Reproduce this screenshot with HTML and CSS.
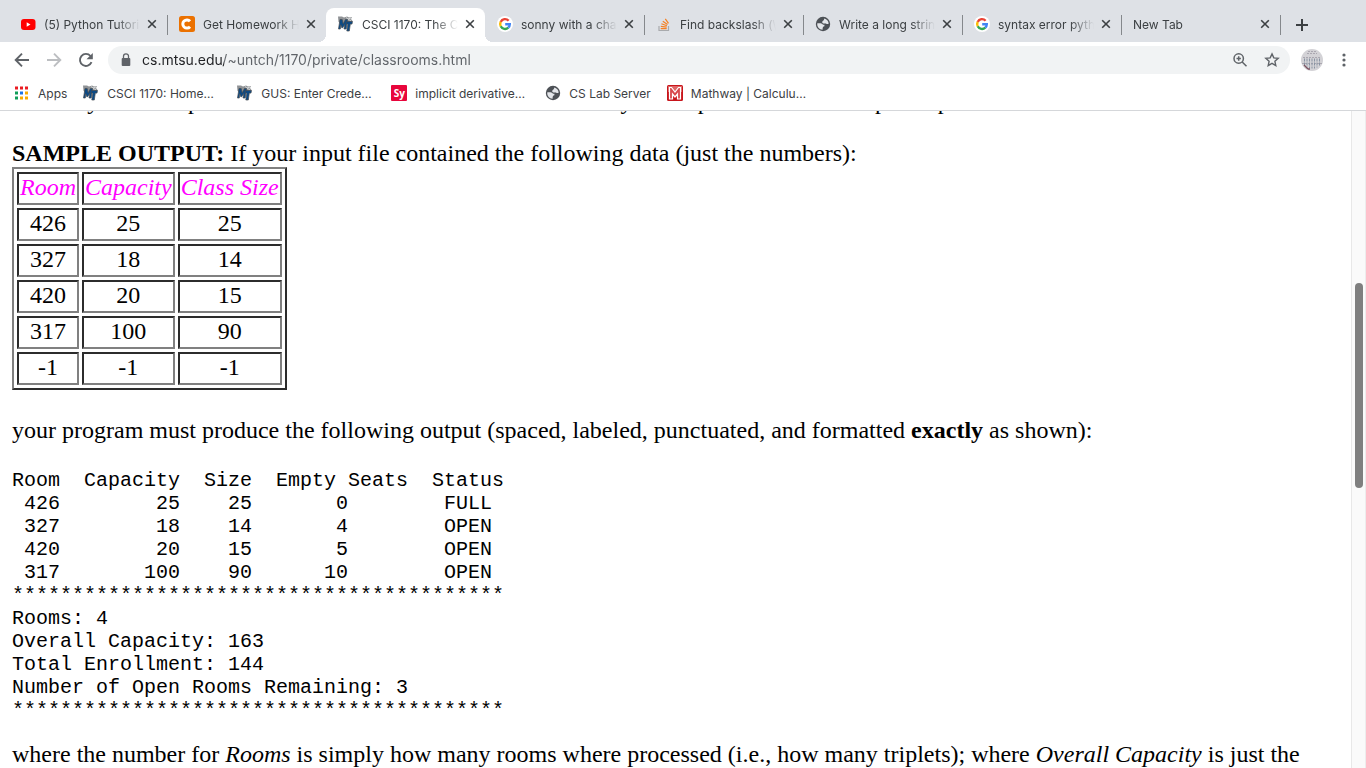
FILE: index.html
```html
<!DOCTYPE html>
<html lang="en">
  <head>
    <meta charset="utf-8">
    <title>CSCI 1170: The Classroom Problem</title>
    <link rel="stylesheet" href="styles.css">
  </head>
  <body>
    <!-- icons used more than once -->
    <svg class="defs" width="0" height="0" aria-hidden="true">
      <symbol id="close" viewBox="0 0 16 16">
        <path d="M4.200 4.200l7.600 7.600M11.800 4.200l-7.600 7.600" stroke="#3c4043" stroke-width="1.600" fill="none"/>
      </symbol>
      <symbol id="google" viewBox="0 0 16 16">
        <circle cx="8" cy="8" r="8" fill="#fff"/>
        <g fill="none" stroke-width="2.4">
          <path d="M11.6 4.7A4.8 4.8 0 0 0 3.7 5.9" stroke="#ea4335"/>
          <path d="M3.7 5.9a4.8 4.8 0 0 0 0 4.4" stroke="#fbbc05"/>
          <path d="M3.7 10.3a4.8 4.8 0 0 0 7.6 1.3" stroke="#34a853"/>
          <path d="M11.3 11.6A4.8 4.8 0 0 0 12.8 8.2H8.2" stroke="#4285f4"/>
        </g>
      </symbol>
      <symbol id="globe" viewBox="0 0 16 16">
        <circle cx="8" cy="8" r="7.2" fill="#4d5156"/>
        <path d="M2.300 7.200h3.200c1.300 0 1.800 1.100 2.600 1.500h1.300v1.600c-1.500.2-1.800 1-1.800 3.400C4.200 13.500 1.800 10.600 2.300 7.200z" fill="#e4e6ea"/>
        <path d="M9.300 2.400c2.400.5 4.200 2.500 4.400 5-.9 1-2 .8-2.700 0H8.700c-1.300 0-1.900-1.200-1.200-2.200.6-.8 1.500-.5 1.800-2.800z" fill="#e4e6ea"/>
      </symbol>
      <symbol id="mt" viewBox="0 0 16 16">
        <path d="M0 .5h4l2 1 3-1 2 1 3-.5-1 2 1.500 2L13 8H4L.5 6z" fill="#8f9295"/>
        <path d="M8 1.500l2 1.500 3-1M10 3.500l3 1" stroke="#e3e5e6" stroke-width=".8" fill="none"/>
        <path d="M.5 13L2 3.500h2.200l1 4.500 2.300-4.500h2L8.200 13H6l.7-4.500-2 3.200h-1l-.9-3L2.300 13z" fill="#0b4a86" stroke="#454b50" stroke-width=".7"/>
        <path d="M8.500 5.500h6l-.5 2.600h-1.700L11.300 15H8.800l1-6.900H8z" fill="#0b4a86" stroke="#454b50" stroke-width=".7"/>
      </symbol>
    </svg>

    <header class="browser">
      <div class="tab-strip">
        <div class="tab">
          <svg class="icon" viewBox="0 0 16 16"><rect x="1" y="3" width="14.500" height="11" rx="3" fill="#f00"/><path d="M6.700 6.200v4.600l3.800-2.300z" fill="#fff"/></svg>
          <span class="tab-title">(5) Python Tutorial</span>
          <button class="tab-close" aria-label="Close tab"><svg class="icon"><use href="#close"/></svg></button>
        </div>
        <div class="tab no-line">
          <svg class="icon" viewBox="0 0 16 16"><rect width="16" height="16" rx="2.500" fill="#eb7100"/><path d="M11 5.300A4.100 4.100 0 1 0 11 10.700" fill="none" stroke="#fff" stroke-width="3"/></svg>
          <span class="tab-title">Get Homework Help</span>
          <button class="tab-close" aria-label="Close tab"><svg class="icon"><use href="#close"/></svg></button>
        </div>
        <div class="tab active no-line">
          <svg class="icon"><use href="#mt"/></svg>
          <span class="tab-title">CSCI 1170: The Classroom</span>
          <button class="tab-close" aria-label="Close tab"><svg class="icon"><use href="#close"/></svg></button>
        </div>
        <div class="tab">
          <svg class="icon"><use href="#google"/></svg>
          <span class="tab-title">sonny with a chance</span>
          <button class="tab-close" aria-label="Close tab"><svg class="icon"><use href="#close"/></svg></button>
        </div>
        <div class="tab">
          <svg class="icon" viewBox="0 0 16 16">
            <path d="M3 10v4.500h9.500V10" fill="none" stroke="#a8aaad" stroke-width="1.200"/>
            <path d="M4.700 12.600h6M4.800 10.400l5.900.8M5.400 7.800l5.500 2M6.800 5.200l4.700 3.400M9.300 2.800l3.200 4.600" stroke="#f48024" stroke-width="1.200"/>
          </svg>
          <span class="tab-title">Find backslash (\) in</span>
          <button class="tab-close" aria-label="Close tab"><svg class="icon"><use href="#close"/></svg></button>
        </div>
        <div class="tab">
          <svg class="icon"><use href="#globe"/></svg>
          <span class="tab-title">Write a long string</span>
          <button class="tab-close" aria-label="Close tab"><svg class="icon"><use href="#close"/></svg></button>
        </div>
        <div class="tab">
          <svg class="icon"><use href="#google"/></svg>
          <span class="tab-title">syntax error python</span>
          <button class="tab-close" aria-label="Close tab"><svg class="icon"><use href="#close"/></svg></button>
        </div>
        <div class="tab">
          <span class="tab-title">New Tab</span>
          <button class="tab-close" aria-label="Close tab"><svg class="icon"><use href="#close"/></svg></button>
        </div>
        <button class="new-tab" aria-label="New tab">
          <svg class="icon" viewBox="0 0 16 16"><path d="M8 2v12M2 8h12" stroke="#3c4043" stroke-width="2"/></svg>
        </button>
      </div>

      <div class="toolbar">
        <button class="tool" aria-label="Back"><svg class="icon" viewBox="0 0 16 16"><path d="M15 8H2M8 1.700L1.700 8 8 14.300" fill="none" stroke="#5f6368" stroke-width="1.900"/></svg></button>
        <button class="tool" aria-label="Forward"><svg class="icon" viewBox="0 0 16 16"><path d="M1 8h13M8 1.700L14.300 8 8 14.300" fill="none" stroke="#bcbec1" stroke-width="1.900"/></svg></button>
        <button class="tool" aria-label="Reload"><svg class="icon" viewBox="0 0 16 16"><path d="M13.500 10.200A6 6 0 1 1 12.500 4" fill="none" stroke="#5f6368" stroke-width="1.900"/><path d="M14.800 1v6.300H8.500z" fill="#5f6368"/></svg></button>
        <div class="address">
          <svg class="icon" viewBox="0 0 16 16"><rect x="3.700" y="6" width="8.600" height="8" rx="1" fill="#5f6368"/><path d="M5.500 6.500V4.300a2.500 2.500 0 0 1 5 0v2.200" fill="none" stroke="#5f6368" stroke-width="1.300"/></svg>
          <input class="url" type="text" aria-label="Address" value="cs.mtsu.edu/~untch/1170/private/classrooms.html">
          <button class="tool" aria-label="Zoom"><svg class="icon" viewBox="0 0 16 16"><circle cx="6.700" cy="6.500" r="4.700" fill="none" stroke="#5f6368" stroke-width="1.500"/><path d="M10.200 10l4.300 4.300M4.500 6.500h4.400M6.700 4.300v4.400" stroke="#5f6368" stroke-width="1.500"/></svg></button>
          <button class="tool" aria-label="Bookmark this page"><svg class="icon" viewBox="0 0 16 16"><path d="M8 1.900l1.800 4 4.400.4-3.300 3 .9 4.300L8 11.400l-3.800 2.200.9-4.300-3.300-3 4.400-.4z" fill="none" stroke="#5f6368" stroke-width="1.400"/></svg></button>
        </div>
        <button class="avatar" aria-label="Profile">
          <svg viewBox="0 0 22 22" width="22" height="22">
            <circle cx="11" cy="11" r="11" fill="#d3d2d6"/>
            <path d="M7 2.500h8M6 4.500h10M2 8.500h18M1 14.500h20" stroke="#aaa7b0" stroke-dasharray="2 1"/>
            <path d="M3.500 9.500v8M6 9.500v9M8.500 9.500v10M11 9.500v10M13.500 9.500v10M16 9.500v9M18.500 9.500v8" stroke="#8994a3" stroke-dasharray="3 1"/>
            <path d="M3 16l4 4M7 20h2" stroke="#7c5361" stroke-width="1.300"/>
          </svg>
        </button>
        <button class="tool" aria-label="Menu"><svg class="icon" viewBox="0 0 16 16"><g fill="#5f6368"><circle cx="8" cy="3" r="1.600"/><circle cx="8" cy="8" r="1.600"/><circle cx="8" cy="13" r="1.600"/></g></svg></button>
      </div>

      <nav class="bookmarks">
        <a class="bookmark" href="#">
          <svg class="icon" viewBox="0 0 16 16">
            <path d="M1 1.500h3v3H1zM6 1.500h3v3H6zM11 1.500h3v3h-3z" fill="#ea1c22"/>
            <path d="M1 6.500h3v3H1zM1 11.500h3v3H1z" fill="#0f9d58"/>
            <path d="M6 6.500h3v3H6z" fill="#1a73e8"/>
            <path d="M11 6.500h3v3h-3zM6 11.500h3v3H6zM11 11.500h3v3h-3z" fill="#f9ab00"/>
          </svg>
          Apps
        </a>
        <a class="bookmark long" href="#"><svg class="icon"><use href="#mt"/></svg>CSCI 1170: Home…</a>
        <a class="bookmark long" href="#"><svg class="icon"><use href="#mt"/></svg>GUS: Enter Crede…</a>
        <a class="bookmark long" href="#"><span class="symbolab">Sy</span>implicit derivative…</a>
        <a class="bookmark" href="#"><svg class="icon"><use href="#globe"/></svg>CS Lab Server</a>
        <a class="bookmark long" href="#">
          <svg class="icon" viewBox="0 0 16 16"><rect width="16" height="16" rx="1.500" fill="#c8151b"/><path d="M1 1h14v6H1z" fill="#df6666"/><path d="M2.500 14V2.500h2L8 7l3.500-4.500h2V14h-3V9L8 12 5.500 9v5z" fill="#d9484c" stroke="#fff" stroke-width="1.200"/></svg>
          Mathway | Calculu…
        </a>
      </nav>
    </header>

    <div class="viewport">
      <main class="page">
        <p class="intro">Note any case the problem statement leaves out and ask before you are past the last test input or part</p>
        <p class="lead"><b>SAMPLE OUTPUT:</b> If your input file contained the following data (just the numbers):</p>
        <table class="data">
          <thead>
            <tr><th>Room</th><th>Capacity</th><th>Class Size</th></tr>
          </thead>
          <tbody>
            <tr><td>426</td><td>25</td><td>25</td></tr>
            <tr><td>327</td><td>18</td><td>14</td></tr>
            <tr><td>420</td><td>20</td><td>15</td></tr>
            <tr><td>317</td><td>100</td><td>90</td></tr>
            <tr><td>-1</td><td>-1</td><td>-1</td></tr>
          </tbody>
        </table>
        <p>your program must produce the following output (spaced, labeled, punctuated, and formatted <b>exactly</b> as shown):</p>
<pre class="output">
Room  Capacity  Size  Empty Seats  Status
 426        25    25       0        FULL
 327        18    14       4        OPEN
 420        20    15       5        OPEN
 317       100    90      10        OPEN
*****************************************
Rooms: 4
Overall Capacity: 163
Total Enrollment: 144
Number of Open Rooms Remaining: 3
*****************************************
</pre>
        <p class="notes">where the number for <i>Rooms</i> is simply how many rooms where processed (i.e., how many triplets); where <i>Overall Capacity</i> is just the</p>
      </main>
      <div class="scrollbar">
        <div class="thumb"></div>
      </div>
    </div>
  </body>
</html>
```

FILE: styles.css
```css
* {
  box-sizing: border-box;
}
body {
  margin: 0;
  height: 100vh;
  display: flex;
  flex-direction: column;
  overflow: hidden;
  background: #fff;
}
button {
  padding: 0;
  border: 0;
  background: none;
}
.defs {
  position: absolute;
}
.icon {
  display: block;
  flex: none;
  width: 16px;
  height: 16px;
}

/* browser chrome */
.browser {
  flex: none;
  font-family: Inter, "Liberation Sans", sans-serif;
  font-size: 12px;
  color: #3c4043;
  border-bottom: 1px solid #d5d7da;
}
.tab-strip {
  display: flex;
  height: 42px;
  padding: 8px 8px 0;
  background: #dee1e6;
}
.tab {
  position: relative;
  display: flex;
  align-items: center;
  flex: 0 1 159px;
  min-width: 0;
  padding: 0 7px 2px 12px;
}
.tab::after {
  content: "";
  position: absolute;
  right: -1px;
  top: 7px;
  width: 1px;
  height: 20px;
  background: #85888c;
}
.no-line::after {
  display: none;
}
.tab-title {
  flex: 1;
  min-width: 0;
  margin-right: 4px;
  overflow: hidden;
  white-space: nowrap;
  -webkit-mask-image: linear-gradient(to left, transparent, #000 24px);
  mask-image: linear-gradient(to left, transparent, #000 24px);
}
.icon + .tab-title {
  margin-left: 8px;
}
.active {
  background: #fff;
  border-radius: 8px 8px 0 0;
}
/* curved feet of the open tab */
.active::before,
.active.no-line::after {
  content: "";
  display: block;
  position: absolute;
  top: auto;
  bottom: 0;
  width: 8px;
  height: 8px;
}
.active::before {
  left: -8px;
  background: radial-gradient(circle at 0 0, transparent 8px, #fff 8px);
}
.active.no-line::after {
  right: -8px;
  background: radial-gradient(circle at 100% 0, transparent 8px, #fff 8px);
}
.new-tab {
  margin-left: 14px;
}

.toolbar {
  display: flex;
  align-items: center;
  gap: 16px;
  height: 36px;
  padding: 0 14px;
}
.address {
  flex: 1;
  display: flex;
  align-items: center;
  gap: 16px;
  height: 28px;
  margin-right: -5px;
  margin-left: -2px;
  padding: 0 10px;
  border-radius: 14px;
  background: #f1f3f4;
}
.url {
  flex: 1;
  min-width: 0;
  height: 28px;
  margin-left: -8px;
  padding: 0 0 2px;
  border: 0;
  font-family: inherit;
  font-size: 14px;
  color: transparent;
  background: linear-gradient(to right, #202124 82px, #5f6368 82px);
  -webkit-background-clip: text;
  background-clip: text;
}
.avatar {
  height: 22px;
  margin-right: -3px;
}

.bookmarks {
  display: flex;
  align-items: center;
  gap: 16px;
  height: 32px;
  padding: 0 14px 2px;
}
.bookmark {
  display: flex;
  align-items: center;
  gap: 8px;
  color: inherit;
  text-decoration: none;
  white-space: nowrap;
}
.long {
  width: 138px;
}
.symbolab {
  flex: none;
  width: 16px;
  border-radius: 1px;
  background: #e8063c;
  color: #fff;
  font: bold 10px/16px "Open Sans", sans-serif;
  text-align: center;
}

/* page shown in the window */
.viewport {
  flex: 1;
  min-height: 0;
  display: flex;
}
.page {
  flex: 1;
  min-width: 0;
  padding: 0 12px;
  overflow: hidden;
  font-family: "Liberation Serif", serif;
  font-size: 24px;
  line-height: 28px;
  color: #000;
}
.page p {
  margin: 24px 0;
}
/* scrolled mostly out of view */
.page .intro {
  margin-top: -24px;
}
.page .lead {
  margin-bottom: 0;
}
.page .notes {
  margin-top: 0;
}
.data {
  margin-bottom: 26px;
  border: 2px outset #808080;
  border-spacing: 3px;
  line-height: 27px;
  text-align: center;
}
.data th,
.data td {
  padding: 0 1px 2px;
  border: 2px inset #808080;
}
.data th {
  font-weight: normal;
  font-style: italic;
  color: #f0f;
}
.output {
  margin: 25px 0 18px;
  font-family: "Liberation Mono", monospace;
  font-size: 20px;
  line-height: 23px;
}
.scrollbar {
  flex: none;
  width: 15px;
  padding: 172px 2px 0 3px;
  border-left: 1px solid #e8e8e8;
  border-right: 1px solid #ededed;
  background: #fafafa;
}
.thumb {
  height: 205px;
  border-radius: 4px;
  background: #7f7f7f;
}
```
